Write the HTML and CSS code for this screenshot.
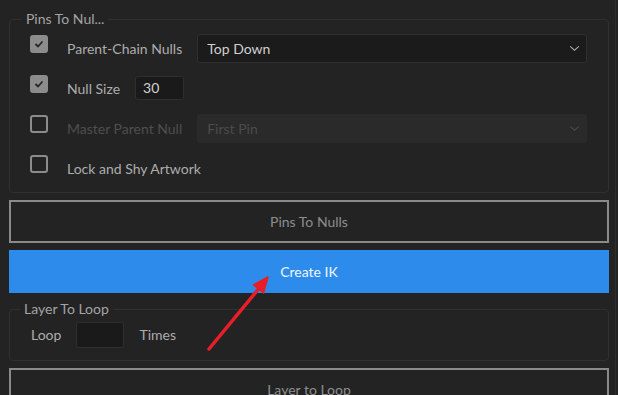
FILE: index.html
```html
<!DOCTYPE html>
<html lang="en">
<head>
  <meta charset="UTF-8" />
  <title>Pins To Nulls</title>
  <link rel="stylesheet" href="styles.css">
</head>
<body>
  <div class="panel">
    <fieldset class="group">
      <legend>Pins To Nul...</legend>
      <div class="row">
        <span class="check on"><svg viewBox="0 0 14 14"><path d="M3.5 7 L6 9.5 L10.5 4.5" /></svg></span>
        <span class="label">Parent-Chain Nulls</span>
        <div class="select">
          <span>Top Down</span>
          <svg class="chev" viewBox="0 0 12 8"><path d="M1 1.5 L6 6 L11 1.5" /></svg>
        </div>
      </div>
      <div class="row">
        <span class="check on"><svg viewBox="0 0 14 14"><path d="M3.5 7 L6 9.5 L10.5 4.5" /></svg></span>
        <span class="label">Null Size</span>
        <div class="field size">30</div>
      </div>
      <div class="row disabled">
        <span class="check"></span>
        <span class="label">Master Parent Null</span>
        <div class="select">
          <span>First Pin</span>
          <svg class="chev" viewBox="0 0 12 8"><path d="M1 1.5 L6 6 L11 1.5" /></svg>
        </div>
      </div>
      <div class="row">
        <span class="check"></span>
        <span class="label">Lock and Shy Artwork</span>
      </div>
    </fieldset>

    <button class="btn">Pins To Nulls</button>
    <button class="btn primary">Create IK</button>

    <fieldset class="group loop">
      <legend>Layer To Loop</legend>
      <div class="row">
        <span class="label">Loop</span>
        <div class="field times"></div>
        <span class="label">Times</span>
      </div>
    </fieldset>

    <button class="btn">Layer to Loop</button>
  </div>

  <svg class="arrow" width="618" height="395" viewBox="0 0 618 395">
    <line x1="209" y1="349" x2="261" y2="286" />
    <polygon points="268,277 263.5,293 253.5,285" />
  </svg>
</body>
</html>
```

FILE: styles.css
```css
* {
  box-sizing: border-box;
}

body {
  margin: 0;
  background: #232323;
  font-family: 'Lato', 'Open Sans', sans-serif;
  font-size: 14px;
  color: #adadad;
  overflow: hidden;
  position: relative;
  height: 395px;
}

.panel {
  width: 617px;
  margin: -3px 0 0 -1px;
  padding: 12px 7px 0 9px;
  border: 1px solid #2e2e2e;
  border-radius: 5px;
  height: 420px;
  display: flex;
  flex-direction: column;
  gap: 7px;
}

.group {
  margin: 0;
  width: 600px;
  padding: 0 21px 4px 20px;
  border: 1px solid #303030;
  border-radius: 4px;
}

.group legend {
  margin-left: -8px;
  padding: 0 4px;
  line-height: 18px;
  color: #a3a3a3;
}

.row {
  height: 40px;
  display: flex;
  align-items: center;
  gap: 15px;
}

.check {
  width: 18px;
  height: 18px;
  flex: none;
  margin: 0 4px 8px 0;
  border: 2px solid #8c8c8c;
  border-radius: 3px;
}

.check.on {
  background: #8c8c8c;
}

.check svg {
  display: block;
  width: 14px;
  height: 14px;
  fill: none;
  stroke: #262626;
  stroke-width: 1.8;
}

.label {
  white-space: nowrap;
}

.select {
  flex: 1;
  height: 29px;
  margin-top: 1px;
  display: flex;
  align-items: center;
  justify-content: space-between;
  padding: 0 6px 0 9px;
  background: #1b1b1b;
  border: 1px solid #2f2f2f;
  border-radius: 3px;
  color: #d0d0d0;
}

.chev {
  width: 11px;
  height: 7px;
  fill: none;
  stroke: #a8a8a8;
  stroke-width: 1.2;
}

.disabled .label {
  color: #4e4e4e;
}

.disabled .select {
  background: #2a2a2a;
  border-color: #2a2a2a;
  color: #4b4b4b;
}

.disabled .chev {
  stroke: #4b4b4b;
}

.field {
  height: 24px;
  background: #1a1a1a;
  border: 1px solid #2e2e2e;
  border-radius: 3px;
  color: #d2d2d2;
  padding: 2px 7px;
  line-height: 18px;
}

.size {
  width: 49px;
}

.loop {
  padding: 0 20px 9px 21px;
}

.loop legend {
  margin-left: -11px;
}

.loop .row {
  height: 33px;
}

.times {
  width: 48px;
  height: 26px;
}

.btn {
  flex: none;
  width: 600px;
  height: 43px;
  background: transparent;
  border: 2px solid #8a8a8a;
  color: #8e8e8e;
  font: inherit;
  cursor: pointer;
}

.btn.primary {
  background: #2d8ceb;
  border-color: #2d8ceb;
  color: #f0f5fc;
}

.arrow {
  position: absolute;
  left: 0;
  top: 0;
  pointer-events: none;
}

.arrow line {
  stroke: #e81e28;
  stroke-width: 3.5;
  stroke-linecap: round;
}

.arrow polygon {
  fill: #e81e28;
  stroke: #e81e28;
  stroke-width: 1.5;
  stroke-linejoin: round;
}
```
